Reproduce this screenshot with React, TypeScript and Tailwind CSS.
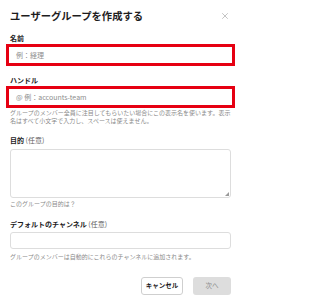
import { X } from 'lucide-react';

const jp = { fontFamily: '"Noto Sans CJK JP", "Noto Sans", sans-serif' };

function Label({ text, optional }: { text: string; optional?: boolean }) {
  return (
    <p className="text-[7px] leading-[10px] font-bold text-[#1d1c1d]">
      {text}
      {optional && <span className="font-normal text-[#616061]"> (任意)</span>}
    </p>
  );
}

export default function App() {
  return (
    <div className="w-[239px] h-[300px] bg-white overflow-hidden" style={jp}>
      <div className="px-[8px]">
        {/* ヘッダー */}
        <div className="flex items-center justify-between h-[32px] pl-[2px]">
          <h1 className="text-[10.3px] font-bold text-[#1d1c1d] leading-none">ユーザーグループを作成する</h1>
          <X className="w-[10px] h-[10px] text-[#9a9a9a] mr-[1px]" strokeWidth={1.4} />
        </div>

        <div className="pl-[2px]">
          <div className="mt-[1px]">
            <Label text="名前" />
          </div>
          <div className="-mx-[4px] mt-[1px] border-[3px] border-[#e60012] h-[22px] flex items-center bg-white">
            <span className="pl-[7px] text-[7px] text-[#8e8e8e]">例：経理</span>
          </div>

          <div className="mt-[9px]">
            <Label text="ハンドル" />
          </div>
          <div className="-mx-[4px] mt-[1px] border-[3px] border-[#e60012] h-[22px] flex items-center bg-white">
            <span className="pl-[7px] text-[7px] text-[#8e8e8e]">@ 例：accounts-team</span>
          </div>
          <p className="mt-[1px] text-[6px] leading-[8px] text-[#8a8a8a]">
            グループのメンバー全員に注目してもらいたい場合にこの表示名を使います。表示名はすべて小文字で入力し、スペースは使えません。
          </p>

          <div className="mt-[10px]">
            <Label text="目的" optional />
          </div>
          <div className="mt-[4px] h-[49px] border border-[#dddddd] rounded-[3px] relative">
            <svg className="absolute right-[1px] bottom-[1px]" width="4" height="4" viewBox="0 0 4 4">
              <path d="M4 0 L4 4 L0 4 Z" fill="#9a9a9a" />
            </svg>
          </div>
          <p className="mt-[2px] text-[6px] leading-[8px] text-[#8a8a8a]">このグループの目的は？</p>

          <div className="mt-[11px]">
            <Label text="デフォルトのチャンネル" optional />
          </div>
          <div className="mt-[3px] h-[17px] border border-[#dddddd] rounded-[3px]" />
          <p className="mt-[4px] text-[6px] leading-[8px] text-[#8a8a8a]">
            グループのメンバーは自動的にこれらのチャンネルに追加されます。
          </p>

          <div className="mt-[16px] flex justify-end gap-[10px]">
            <button className="h-[18px] w-[42px] border border-[#cfcfcf] rounded-[3px] bg-white text-[6.5px] font-bold text-[#1d1c1d]">
              キャンセル
            </button>
            <button className="h-[18px] w-[38px] rounded-[3px] bg-[#dddddd] text-[6.5px] text-[#8a8a8a]">
              次へ
            </button>
          </div>
        </div>
      </div>
    </div>
  );
}
